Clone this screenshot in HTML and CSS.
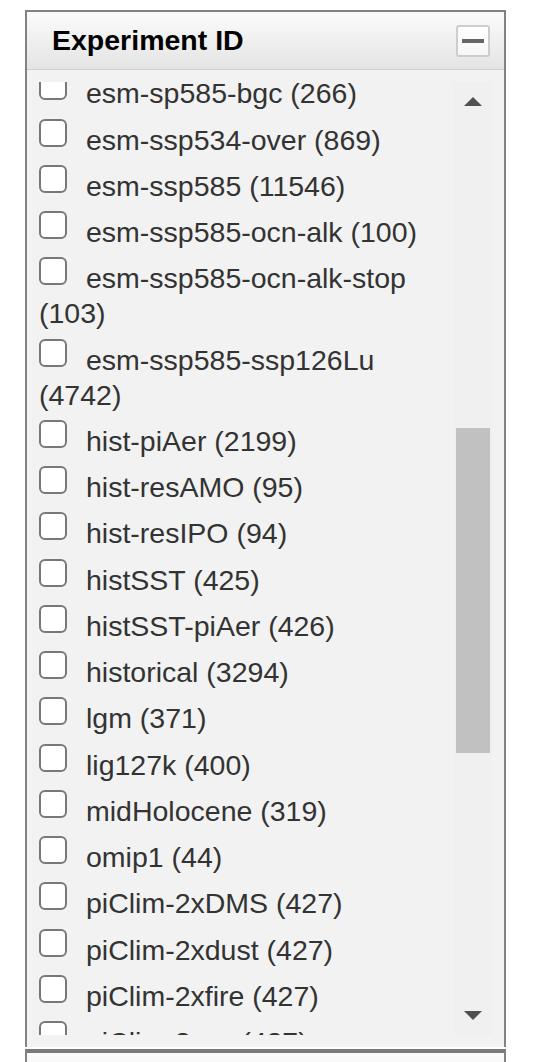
FILE: index.html
```html
<!DOCTYPE html>
<html lang="en">
<head>
<meta charset="utf-8">
<title>Experiment ID facet</title>
<link rel="stylesheet" href="styles.css">
</head>
<body>
<section class="facet">
  <header class="facet-head">
    <h2 class="facet-title">Experiment ID</h2>
    <button class="collapse-btn" type="button" aria-label="Collapse"><span class="minus"></span></button>
  </header>
  <div class="facet-body">
    <div class="list-viewport">
      <ul class="option-list">
        <li class="option"><span class="box"></span>esm-sp585-bgc (266)</li>
        <li class="option"><span class="box"></span>esm-ssp534-over (869)</li>
        <li class="option"><span class="box"></span>esm-ssp585 (11546)</li>
        <li class="option"><span class="box"></span>esm-ssp585-ocn-alk (100)</li>
        <li class="option"><span class="box"></span>esm-ssp585-ocn-alk-stop (103)</li>
        <li class="option"><span class="box"></span>esm-ssp585-ssp126Lu (4742)</li>
        <li class="option"><span class="box"></span>hist-piAer (2199)</li>
        <li class="option"><span class="box"></span>hist-resAMO (95)</li>
        <li class="option"><span class="box"></span>hist-resIPO (94)</li>
        <li class="option"><span class="box"></span>histSST (425)</li>
        <li class="option"><span class="box"></span>histSST-piAer (426)</li>
        <li class="option"><span class="box"></span>historical (3294)</li>
        <li class="option"><span class="box"></span>lgm (371)</li>
        <li class="option"><span class="box"></span>lig127k (400)</li>
        <li class="option"><span class="box"></span>midHolocene (319)</li>
        <li class="option"><span class="box"></span>omip1 (44)</li>
        <li class="option"><span class="box"></span>piClim-2xDMS (427)</li>
        <li class="option"><span class="box"></span>piClim-2xdust (427)</li>
        <li class="option"><span class="box"></span>piClim-2xfire (427)</li>
        <li class="option"><span class="box"></span>piClim-2xss (427)</li>
        <li class="option"><span class="box"></span>piClim-2xVOC (427)</li>
        <li class="option"><span class="box"></span>piClim-4xCO2 (427)</li>
      </ul>
    </div>
    <div class="scrollbar">
      <div class="sb-btn">
        <svg width="18" height="9" viewBox="0 0 18 9"><polygon points="9,0 18,9 0,9" fill="#505050"/></svg>
      </div>
      <div class="sb-track"><div class="sb-thumb"></div></div>
      <div class="sb-btn">
        <svg width="18" height="9" viewBox="0 0 18 9"><polygon points="0,0 18,0 9,9" fill="#505050"/></svg>
      </div>
    </div>
  </div>
</section>
<section class="facet facet-next">
  <header class="facet-head"></header>
</section>
</body>
</html>
```
FILE: styles.css
```css
html, body {
  margin: 0;
  padding: 0;
  background: #ffffff;
}

body {
  padding-top: 10px;
  font-family: "Liberation Sans", Arial, sans-serif;
}

.facet {
  width: 477px;
  margin-left: 25px;
  border: 2px solid #828282;
  border-bottom: none;
  background: #f2f2f2;
}

.facet-head {
  height: 58px;
  box-sizing: border-box;
  display: flex;
  align-items: center;
  justify-content: space-between;
  padding: 0 14px 0 25px;
  background: linear-gradient(#fbfbfb, #e4e4e4);
  border-bottom: 1px solid #cfcfcf;
}

.facet-title {
  margin: 0;
  font-size: 28.5px;
  font-weight: bold;
  color: #000;
}

.collapse-btn {
  width: 34px;
  height: 32px;
  padding: 0;
  box-sizing: border-box;
  border: 2px solid #cdcdcd;
  border-radius: 3px;
  background: linear-gradient(#ffffff, #f6f6f6);
  display: flex;
  align-items: center;
  justify-content: center;
}

.minus {
  display: block;
  width: 22px;
  height: 4px;
  background: #666;
}

.facet-body {
  display: grid;
  grid-template-columns: 1fr 39px;
  padding: 12px;
  height: 953px;
  box-sizing: content-box;
}

.list-viewport {
  overflow: hidden;
  height: 953px;
}

.option-list {
  list-style: none;
  margin: -17px 0 0 0;
  padding: 0;
}

.option {
  padding-top: 11.25px;
  line-height: 35px;
  font-size: 28.5px;
  color: #333;
}

.box {
  display: inline-block;
  width: 28px;
  height: 28px;
  box-sizing: border-box;
  border: 2px solid #787878;
  border-radius: 6px;
  background: #fff;
  vertical-align: 3px;
  margin-top: -6px;
  margin-right: 19px;
}

.scrollbar {
  display: flex;
  flex-direction: column;
  height: 953px;
  background: #f0f0f0;
}

.sb-btn {
  height: 39px;
  display: flex;
  align-items: center;
  justify-content: center;
  flex: none;
}

.sb-track {
  flex: 1;
}

.sb-thumb {
  margin: 307px 2px 0 3px;
  height: 325px;
  background: #c1c1c1;
}

.facet-next {
  margin-top: 2px;
  border-top: 4px solid #7a7a7a;
  height: 20px;
  background: #fafafa;
}

.facet-next .facet-head {
  border-bottom: none;
  background: linear-gradient(#fafafa, #f0f0f0);
}
```
